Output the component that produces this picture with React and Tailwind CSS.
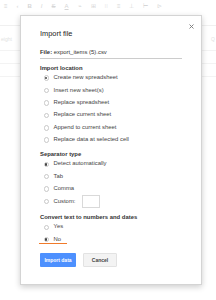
import React from 'react'

const font = { fontFamily: '"Liberation Sans", Arial, sans-serif' }

const Radio = ({ label, checked, children, mark }) => (
  <div className='relative flex items-center h-[12.4px] pl-[3.5px] gap-[4.5px]'>
    <span className='w-[5.5px] h-[5.5px] rounded-full border-[0.6px] border-[#c8c8c8] flex items-center justify-center'>
      {checked && <span className='w-[2.4px] h-[2.4px] rounded-full bg-[#444]'></span>}
    </span>
    <span className='text-[5.9px] text-[#444] leading-none'>{label}</span>
    {children}
    {mark && <span className='absolute left-[-1px] top-[9.6px] w-[28px] h-[1px] bg-[#f07a2a]'></span>}
  </div>
)

const Heading = ({ children, className }) => (
  <p className={`text-[5.9px] font-bold text-[#333] leading-[8px] ${className}`}>{children}</p>
)

const App = () => {
  return (
    <div style={font} className='relative w-[216px] h-[300px] bg-white overflow-hidden'>
      {/* faint sheets toolbar behind the dialog */}
      <div className='flex items-center h-[12px] gap-[9px] pl-[4px] text-[6px] text-[#d6d6d6]'>
        <span>≡</span>
        <span>‹</span>
        <span className='font-bold'>B</span>
        <span className='italic'>I</span>
        <span className='line-through'>S</span>
        <span className='underline'>A</span>
        <span>⌁</span>
        <span>⊞</span>
        <span>⁞⁞</span>
        <span>≡</span>
        <span>⊥</span>
        <span>⊢</span>
        <span>⊳</span>
      </div>
      <div className='h-[14px] border-b border-[#f0f0f0]'></div>
      <div className='flex justify-between mt-[10px] text-[5px] text-[#e2e2e2] px-[1px]'>
        <span>eight</span>
        <span>Q</span>
      </div>
      <div className='border-b border-[#f3f3f3] mt-[6px]'></div>
      <div className='border-b border-[#f3f3f3] mt-[12px]'></div>
      <div className='border-b border-[#f3f3f3] mt-[12px]'></div>

      {/* dialog */}
      <div className='absolute left-[20px] top-[15px] w-[182px] bg-white border border-[#d4d4d4] shadow-[0_2px_6px_rgba(0,0,0,0.2)] px-[19px] pt-[13px] pb-[17px]'>
        <svg className='absolute right-[7px] top-[8px] w-[5px] h-[5px]' viewBox='0 0 10 10'>
          <path d='M1 1L9 9M9 1L1 9' stroke='#777' strokeWidth='1.8' />
        </svg>
        <p className='text-[7.4px] text-[#222] leading-[10px]'>Import file</p>
        <div className='mt-[9px] pb-[2px] border-b border-[#ccc]'>
          <p className='text-[5.9px] text-[#333] leading-[8px]'><span className='font-bold'>File:</span> export_items (5).csv</p>
        </div>
        <Heading className='mt-[5px]'>Import location</Heading>
        <Radio label='Create new spreadsheet' checked />
        <Radio label='Insert new sheet(s)' />
        <Radio label='Replace spreadsheet' />
        <Radio label='Replace current sheet' />
        <Radio label='Append to current sheet' />
        <Radio label='Replace data at selected cell' />
        <Heading className='mt-[3.8px]'>Separator type</Heading>
        <Radio label='Detect automatically' checked />
        <Radio label='Tab' />
        <Radio label='Comma' />
        <Radio label='Custom:'>
          <span className='w-[18px] h-[13px] border border-[#d9d9d9] ml-[2px]'></span>
        </Radio>
        <Heading className='mt-[5.4px]'>Convert text to numbers and dates</Heading>
        <Radio label='Yes' />
        <Radio label='No' checked mark />
        <div className='flex gap-[7px] mt-[7.4px]'>
          <button className='h-[14px] w-[36px] rounded-[1px] bg-[#4d90fe] text-white text-[5px] font-bold'>Import data</button>
          <button className='h-[14px] w-[34px] rounded-[1px] bg-[#f3f3f3] border border-[#e2e2e2] text-[#444] text-[5px] font-bold'>Cancel</button>
        </div>
      </div>
    </div>
  )
}

export default App
